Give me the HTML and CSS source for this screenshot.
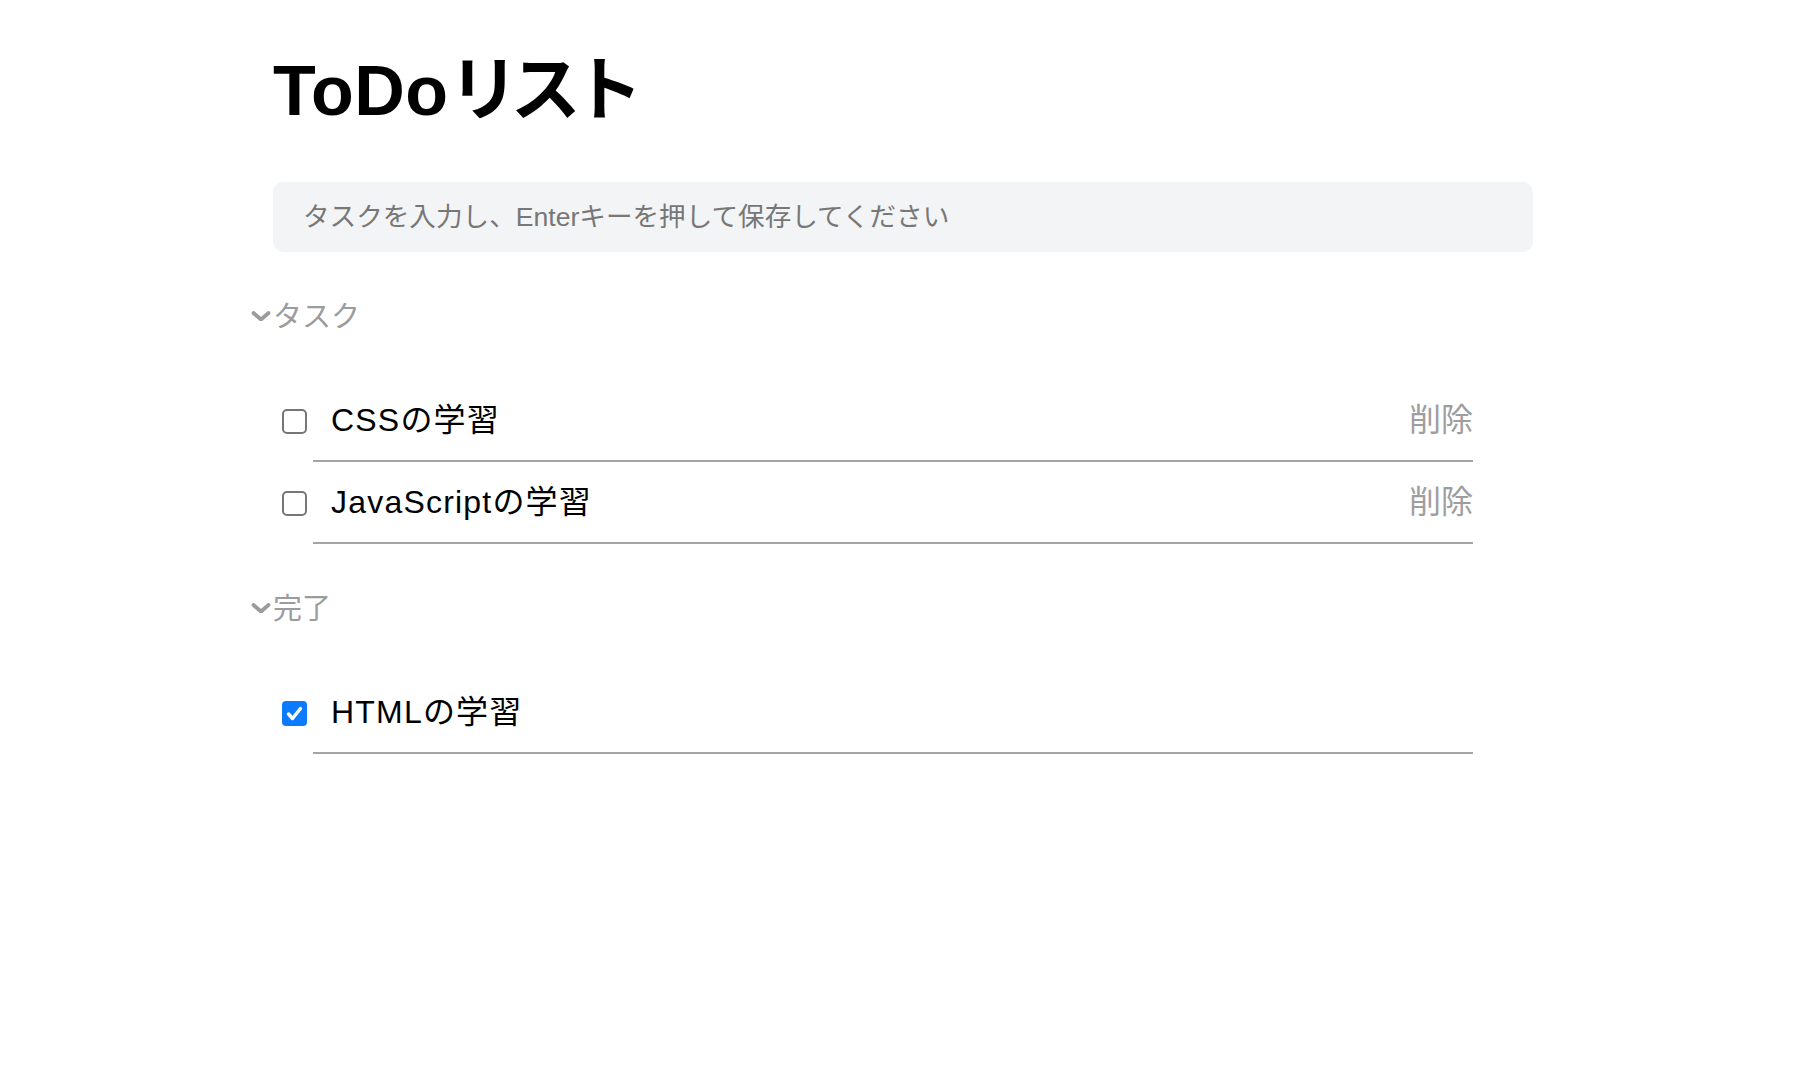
FILE: index.html
```html
<!DOCTYPE html>
<html lang="ja">
<head>
<meta charset="utf-8">
<title>ToDoリスト</title>
<link rel="stylesheet" href="styles.css">
</head>
<body>
<div class="app">
  <h1 class="title"><span class="title-latin">ToDo</span>リスト</h1>
  <input class="task-input" type="text" placeholder="タスクを入力し、Enterキーを押して保存してください">

  <section class="group">
    <div class="group-header">
      <svg class="chevron" width="20" height="10" viewBox="0 0 20 10"><polyline points="2.5,2 10,8.5 17.5,2" fill="none" stroke="#9c9c9c" stroke-width="3.8" stroke-linecap="round" stroke-linejoin="round"/></svg>
      <span class="group-title">タスク</span>
    </div>
    <ul class="list">
      <li class="row">
        <span class="check"></span>
        <div class="row-body">
          <span class="row-text">CSSの学習</span>
          <span class="delete">削除</span>
        </div>
      </li>
      <li class="row">
        <span class="check"></span>
        <div class="row-body">
          <span class="row-text">JavaScriptの学習</span>
          <span class="delete">削除</span>
        </div>
      </li>
    </ul>
  </section>

  <section class="group">
    <div class="group-header">
      <svg class="chevron" width="20" height="10" viewBox="0 0 20 10"><polyline points="2.5,2 10,8.5 17.5,2" fill="none" stroke="#9c9c9c" stroke-width="3.8" stroke-linecap="round" stroke-linejoin="round"/></svg>
      <span class="group-title">完了</span>
    </div>
    <ul class="list">
      <li class="row">
        <span class="check checked"><svg width="25" height="25" viewBox="0 0 25 25"><polyline points="6.5,13 10.5,17.5 18.5,7.5" fill="none" stroke="#ffffff" stroke-width="3.4" stroke-linecap="round" stroke-linejoin="round"/></svg></span>
        <div class="row-body">
          <span class="row-text">HTMLの学習</span>
        </div>
      </li>
    </ul>
  </section>
</div>
</body>
</html>
```

FILE: styles.css
```css
html, body {
  margin: 0;
  padding: 0;
  background: #ffffff;
}

body {
  font-family: "Liberation Sans", "Noto Sans CJK JP", sans-serif;
  color: #000000;
}

.app {
  width: 1260px;
  margin-left: 273px;
  display: flex;
  flex-direction: column;
}

.title {
  margin: 0;
  padding-top: 42px;
  height: 86px;
  font-family: "Noto Sans CJK JP", sans-serif;
  font-weight: 700;
  font-size: 70px;
  line-height: 86px;
  letter-spacing: -8px;
  color: #000000;
}

.title-latin {
  font-family: "Liberation Sans", "Noto Sans CJK JP", sans-serif;
  letter-spacing: 0.5px;
  line-height: 0;
}

.task-input {
  margin-top: 54px;
  height: 70px;
  box-sizing: border-box;
  width: 100%;
  border: none;
  outline: none;
  border-radius: 10px;
  background: #f3f4f6;
  padding: 0 30px;
  font-family: "Liberation Sans", "Noto Sans CJK JP", sans-serif;
  font-size: 26.6px;
  color: #333333;
}

.task-input::placeholder {
  color: #777777;
}

.group-header {
  display: flex;
  align-items: center;
  height: 40px;
  margin: 44px 0;
}

.chevron {
  display: block;
  margin-left: -22px;
  margin-right: 2px;
  flex: none;
}

.group-title {
  font-family: "Noto Sans CJK JP", sans-serif;
  font-size: 29px;
  line-height: 40px;
  margin-bottom: 4px;
  color: #9c9c9c;
}

.list {
  list-style: none;
  margin: 0;
  padding: 0;
}

.row {
  display: flex;
  align-items: center;
  padding-left: 9px;
}

.check {
  flex: none;
  width: 25px;
  height: 25px;
  box-sizing: border-box;
  border: 2px solid #767676;
  border-radius: 5px;
  background: #ffffff;
  display: flex;
}

.check.checked {
  border: none;
  background: #0b7aff;
  border-radius: 4px;
}

.check svg {
  display: block;
}

.row-body {
  flex: 1;
  display: flex;
  align-items: center;
  height: 80px;
  border-bottom: 2px solid #a4a4a4;
  margin-left: 6px;
  margin-right: 60px;
}

.row-text {
  padding-left: 18px;
  font-size: 32px;
  line-height: 40px;
  letter-spacing: 1.2px;
  color: #000000;
}

.delete {
  margin-left: auto;
  font-size: 32px;
  line-height: 40px;
  color: #9e9e9e;
}
```
